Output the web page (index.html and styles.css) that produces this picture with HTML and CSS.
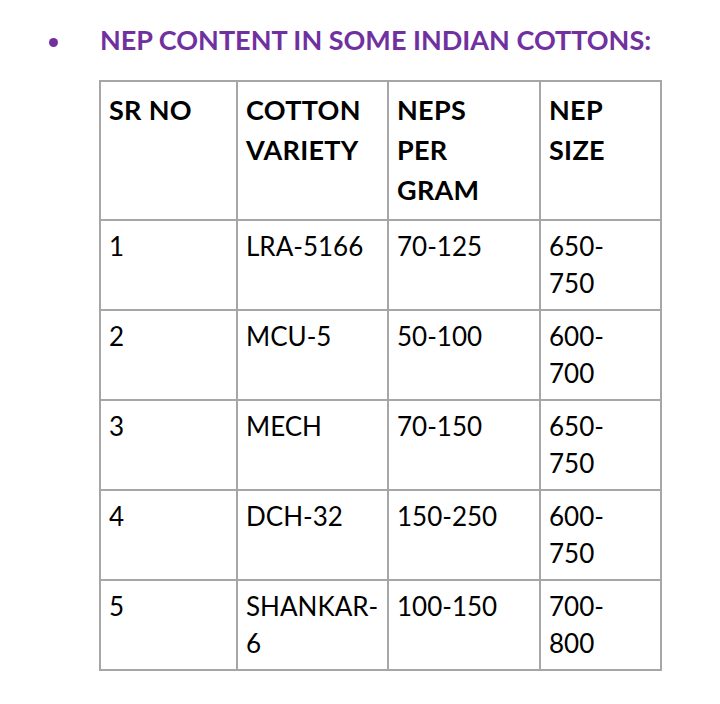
FILE: index.html
```html
<!DOCTYPE html>
<html>
<head>
<meta charset="utf-8">
<link rel="stylesheet" href="styles.css">
</head>
<body>
<div class="page">
  <div class="title-row">
    <span class="bullet"></span>
    <h1 class="title">NEP CONTENT IN SOME INDIAN COTTONS:</h1>
  </div>
  <table class="nep-table">
    <colgroup>
      <col class="c1"><col class="c2"><col class="c3"><col class="c4">
    </colgroup>
    <tr class="head">
      <th>SR NO</th>
      <th>COTTON<br>VARIETY</th>
      <th>NEPS<br>PER<br>GRAM</th>
      <th>NEP<br>SIZE</th>
    </tr>
    <tr>
      <td>1</td><td>LRA-5166</td><td>70-125</td><td>650-<br>750</td>
    </tr>
    <tr>
      <td>2</td><td>MCU-5</td><td>50-100</td><td>600-<br>700</td>
    </tr>
    <tr>
      <td>3</td><td>MECH</td><td>70-150</td><td>650-<br>750</td>
    </tr>
    <tr>
      <td>4</td><td>DCH-32</td><td>150-250</td><td>600-<br>750</td>
    </tr>
    <tr>
      <td>5</td><td>SHANKAR-<br>6</td><td>100-150</td><td>700-<br>800</td>
    </tr>
  </table>
</div>
</body>
</html>
```

FILE: styles.css
```css
html, body {
  margin: 0;
  padding: 0;
  background: #ffffff;
}

body {
  font-family: Lato, "Open Sans", sans-serif;
  color: #000000;
}

.page {
  width: 720px;
  height: 704px;
  padding-top: 20px;
  box-sizing: border-box;
}

.title-row {
  display: flex;
  align-items: flex-start;
  padding-left: 49px;
  height: 44px;
}

.bullet {
  width: 9px;
  height: 9px;
  margin-top: 18px;
  border-radius: 50%;
  background: #7030a0;
  flex: none;
}

.title {
  margin: 0 0 0 42px;
  font-size: 27px;
  font-weight: 700;
  color: #7030a0;
  line-height: 40px;
  white-space: nowrap;
}

.nep-table {
  margin-top: 16px;
  margin-left: 99px;
  border-collapse: collapse;
  table-layout: fixed;
  width: 561px;
}

.c1 { width: 137px; }
.c2 { width: 151px; }
.c3 { width: 152px; }
.c4 { width: 121px; }

.nep-table th,
.nep-table td {
  border: 2px solid #a6a6a6;
  vertical-align: top;
  text-align: left;
  padding: 7px 6px 0 8px;
  font-size: 26px;
  white-space: nowrap;
}

.nep-table th {
  font-size: 27px;
  font-weight: 700;
  letter-spacing: 0.3px;
  line-height: 40px;
  padding-top: 8px;
}

.nep-table td {
  font-weight: 400;
  line-height: 37px;
}

.nep-table tr.head {
  height: 139px;
}

.nep-table tr {
  height: 90px;
}
```
